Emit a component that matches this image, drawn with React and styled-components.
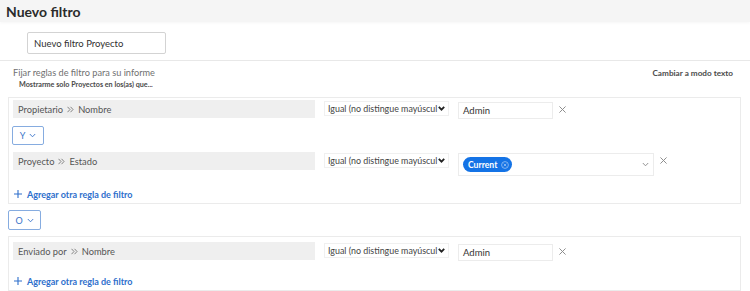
import React from "react";
import styled, { createGlobalStyle } from "styled-components";

const GlobalStyle = createGlobalStyle`
  body {
    margin: 0;
    background: #ffffff;
    font-family: Lato, "Open Sans", Arial, sans-serif;
    color: #3c3c3c;
  }
`;

const Page = styled.div`
  width: 750px;
  height: 291px;
  overflow: hidden;
  background: #fff;
`;

const Header = styled.div`
  height: 22px;
  background: #f5f5f5;
  box-shadow: 0 1px 3px rgba(0, 0, 0, 0.04);
  padding-left: 6px;
  display: flex;
  align-items: center;
  h1 {
    margin: 0;
    font-size: 14px;
    font-weight: 700;
    color: #2b2b2b;
  }
`;

const NameRow = styled.div`
  padding: 10px 0 6px 27px;
  border-bottom: 1px solid #e8e8e8;
`;

const NameInput = styled.div`
  box-sizing: border-box;
  width: 139px;
  height: 22px;
  border: 1px solid #d3d3d3;
  border-radius: 2px;
  padding-left: 6px;
  display: flex;
  align-items: center;
  font-size: 9.5px;
  color: #2f2f2f;
`;

const InfoRow = styled.div`
  display: flex;
  justify-content: space-between;
  padding: 5px 17px 0 13px;
`;

const InfoLeft = styled.div`
  display: flex;
  flex-direction: column;
`;

const Hint = styled.div`
  font-size: 9.2px;
  line-height: 13px;
  color: #707070;
`;

const Sub = styled.div`
  font-size: 7.2px;
  line-height: 12px;
  font-weight: 700;
  color: #4a4a4a;
  padding-left: 6px;
`;

const SwitchLink = styled.div`
  font-size: 8.2px;
  font-weight: 700;
  color: #4a4a4a;
  line-height: 14px;
`;

const Card = styled.div`
  box-sizing: border-box;
  margin: ${(p) => p.$mt}px 9px 0 8px;
  border: 1px solid #ebebeb;
  padding: ${(p) => p.$pt}px 4px 3px 4px;
`;

const Row = styled.div`
  display: flex;
  align-items: flex-start;
  height: ${(p) => p.$h}px;
`;

const Field = styled.div`
  box-sizing: border-box;
  width: 302px;
  height: 18px;
  background: #efefef;
  padding-left: 5px;
  display: flex;
  align-items: center;
  gap: 4px;
  font-size: 9.3px;
  color: #555;
  flex-shrink: 0;
`;

const Operator = styled.div`
  box-sizing: border-box;
  width: 125px;
  height: 15px;
  margin: 1px 0 0 9px;
  padding: 0 3px;
  border: 1px solid #f0f0f0;
  background: #fff;
  display: flex;
  align-items: center;
  justify-content: space-between;
  font-size: 8.9px;
  color: #444;
  white-space: nowrap;
  flex-shrink: 0;
  svg {
    flex-shrink: 0;
    margin-left: 1px;
  }
`;

const ValueInput = styled.div`
  box-sizing: border-box;
  width: ${(p) => p.$w}px;
  height: ${(p) => p.$h}px;
  margin: ${(p) => p.$mt}px 0 0 9px;
  border: 1px solid #ececec;
  padding: 0 4px;
  display: flex;
  align-items: center;
  justify-content: space-between;
  font-size: 9.5px;
  color: #333;
  flex-shrink: 0;
`;

const Remove = styled.div`
  margin: ${(p) => p.$mt}px 0 0 6px;
  width: 7px;
  height: 7px;
  display: flex;
`;

const Chip = styled.div`
  height: 15px;
  border-radius: 8px;
  background: #1473e6;
  color: #fff;
  font-size: 8.6px;
  font-weight: 700;
  display: flex;
  align-items: center;
  gap: 4px;
  padding: 0 3px 0 5px;
`;

const Connector = styled.div`
  box-sizing: border-box;
  width: ${(p) => p.$w}px;
  height: ${(p) => p.$h}px;
  margin: ${(p) => p.$m};
  border: 1px solid #86ace0;
  border-radius: 2px;
  display: flex;
  align-items: center;
  justify-content: center;
  gap: 4px;
  font-size: 9px;
  color: #3a74c9;
`;

const AddRule = styled.div`
  display: flex;
  align-items: center;
  gap: 5px;
  margin-top: ${(p) => p.$mt}px;
  padding-left: 1px;
  height: 12px;
  font-size: 9px;
  font-weight: 700;
  color: #2e6fcc;
`;

const Chevrons = () => (
  <svg width="7" height="7" viewBox="0 0 7 7" fill="none" stroke="#777" strokeWidth="0.9">
    <path d="M0.5 0.8 L3 3.5 L0.5 6.2" />
    <path d="M3.5 0.8 L6 3.5 L3.5 6.2" />
  </svg>
);

const BoldChevron = () => (
  <svg width="7" height="5" viewBox="0 0 7 5" fill="none" stroke="#222" strokeWidth="1.8">
    <path d="M0.8 0.8 L3.5 3.6 L6.2 0.8" />
  </svg>
);

const SmallChevron = ({ color = "#888" }) => (
  <svg width="7" height="5" viewBox="0 0 7 5" fill="none" stroke={color} strokeWidth="0.9">
    <path d="M0.8 1 L3.5 3.8 L6.2 1" />
  </svg>
);

const Cross = () => (
  <svg width="7" height="7" viewBox="0 0 8 8" stroke="#8a8a8a" strokeWidth="1.1">
    <path d="M0.5 0.5 L7.5 7.5 M7.5 0.5 L0.5 7.5" />
  </svg>
);

const ChipClose = () => (
  <svg width="8" height="8" viewBox="0 0 8 8" fill="none" stroke="#9cc3f3" strokeWidth="0.8">
    <circle cx="4" cy="4" r="3.4" />
    <path d="M2.7 2.7 L5.3 5.3 M5.3 2.7 L2.7 5.3" />
  </svg>
);

const Plus = () => (
  <svg width="8" height="8" viewBox="0 0 8 8" stroke="#2e6fcc" strokeWidth="1.1">
    <path d="M4 0 V8 M0 4 H8" />
  </svg>
);

const RuleField = ({ a, b }) => (
  <Field>
    <span>{a}</span>
    <Chevrons />
    <span>{b}</span>
  </Field>
);

const OperatorSelect = () => (
  <Operator>
    <span>Igual (no distingue mayúscul</span>
    <BoldChevron />
  </Operator>
);

const TextRule = ({ a, b, value }) => (
  <Row $h={19}>
    <RuleField a={a} b={b} />
    <OperatorSelect />
    <ValueInput $w={95} $h={17} $mt={2}>
      {value}
    </ValueInput>
    <Remove $mt={6}>
      <Cross />
    </Remove>
  </Row>
);

export default function App() {
  return (
    <Page>
      <GlobalStyle />
      <Header>
        <h1>Nuevo filtro</h1>
      </Header>
      <NameRow>
        <NameInput>Nuevo filtro Proyecto</NameInput>
      </NameRow>
      <InfoRow>
        <InfoLeft>
          <Hint>Fijar reglas de filtro para su informe</Hint>
          <Sub>Mostrarme solo Proyectos en los(as) que...</Sub>
        </InfoLeft>
        <SwitchLink>Cambiar a modo texto</SwitchLink>
      </InfoRow>

      <Card $mt={6} $pt={2}>
        <TextRule a="Propietario" b="Nombre" value="Admin" />
        <Connector $w={32} $h={19} $m="7px 0 7px -1px">
          Y <SmallChevron color="#3a74c9" />
        </Connector>
        <Row $h={24}>
          <RuleField a="Proyecto" b="Estado" />
          <OperatorSelect />
          <ValueInput $w={196} $h={23} $mt={1}>
            <Chip>
              Current <ChipClose />
            </Chip>
            <SmallChevron />
          </ValueInput>
          <Remove $mt={5}>
            <Cross />
          </Remove>
        </Row>
        <AddRule $mt={12}>
          <Plus />
          Agregar otra regla de filtro
        </AddRule>
      </Card>

      <Connector $w={33} $h={20} $m="6px 0 0 8px">
        O <SmallChevron color="#3a74c9" />
      </Connector>

      <Card $mt={6} $pt={5}>
        <TextRule a="Enviado por" b="Nombre" value="Admin" />
        <AddRule $mt={14}>
          <Plus />
          Agregar otra regla de filtro
        </AddRule>
      </Card>
    </Page>
  );
}
